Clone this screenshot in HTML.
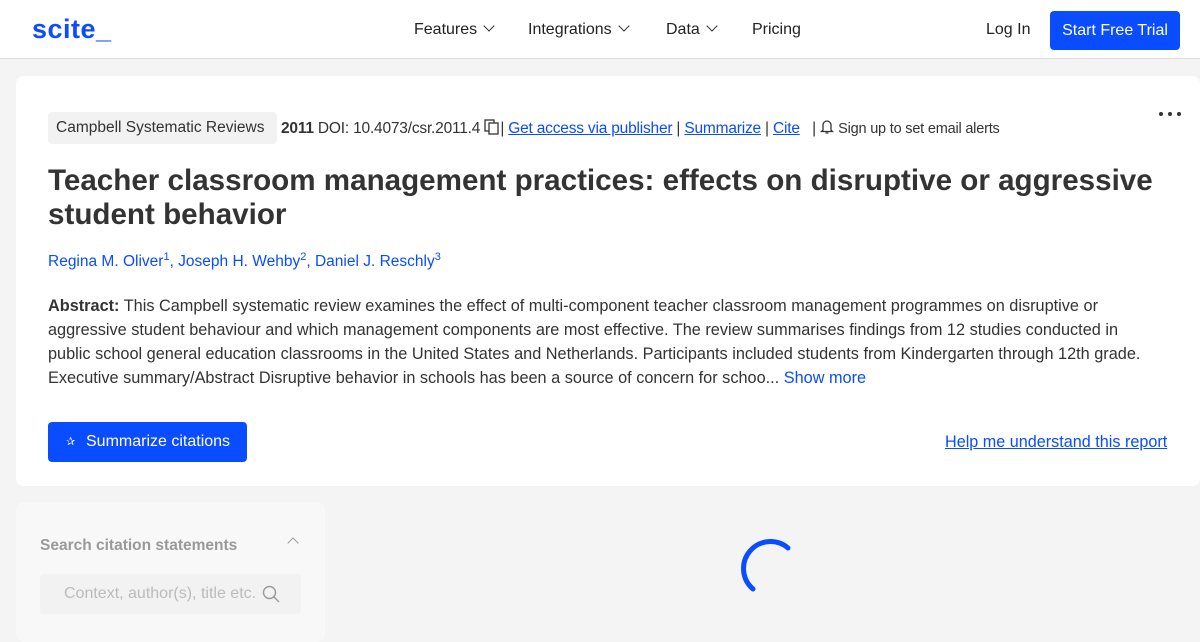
<!DOCTYPE html>
<html><head><style>
*{margin:0;padding:0;box-sizing:border-box}
body{width:1200px;height:630px;overflow:hidden;background:#f4f4f4;font-family:"Liberation Sans",sans-serif;color:#222;position:relative}
.hdr{position:absolute;left:0;top:0;width:1200px;height:59px;background:#fff;border-bottom:1px solid #ddd}
.logo{position:absolute;left:32px;top:14px;font-size:27px;font-weight:bold;color:#0a4cff;letter-spacing:0.5px}
.nav{position:absolute;top:21px;font-size:16px;color:#222}
.chev{display:inline-block;width:8px;height:8px;border-right:1.2px solid #333;border-bottom:1.2px solid #333;transform:rotate(45deg);margin-left:8px;position:relative;top:-4px}
.btn{position:absolute;left:1050px;top:11px;width:130px;height:39px;background:#0a4cff;color:#fff;border-radius:4px;font-size:16px;line-height:39px;text-align:center}
.card{position:absolute;left:16px;top:76px;width:1184px;height:410px;background:#fff;border-radius:8px}
.tag{position:absolute;left:48px;top:112px;height:32px;width:229px;padding:0 8px;background:#f2f2f2;border-radius:4px;font-size:15.5px;line-height:32px;color:#333}
.meta{position:absolute;left:281px;top:119px;font-size:15.5px;color:#333;white-space:nowrap;letter-spacing:-0.2px}
a{color:#0a4cff;text-decoration:underline}
h1{position:absolute;left:48px;top:164px;width:1130px;font-size:29.6px;line-height:34px;font-weight:bold;color:#333}
.auth{position:absolute;left:48px;top:251px;font-size:15.5px;color:#0a4cff}
.auth sup{font-size:11px;color:#0a4cff}
.abs{position:absolute;left:48px;top:294px;width:1110px;font-size:16.3px;line-height:24px;color:#333}
.sb{position:absolute;left:48px;top:422px;width:199px;height:40px;background:#0a4cff;border-radius:4px;color:#fff;font-size:16px;line-height:40px;padding-left:38px}
.help{position:absolute;left:945px;top:433px;font-size:16.2px}
.side{position:absolute;left:16px;top:502px;width:309px;height:140px;background:#f8f8f8;border-radius:8px}
.st{position:absolute;left:40px;top:537px;font-size:15.5px;font-weight:bold;color:#999}
.inp{position:absolute;left:40px;top:574px;width:261px;height:40px;background:#f2f2f2;border-radius:3px;font-size:16px;color:#bbb;line-height:40px;padding-left:24px}
.dot{position:absolute;top:112px;width:4px;height:4px;border-radius:2px;background:#333}
</style></head><body>
<div class="hdr">
<div class="logo">scite_</div>
<div class="nav" style="left:414px">Features<span class="chev"></span></div>
<div class="nav" style="left:528px">Integrations<span class="chev"></span></div>
<div class="nav" style="left:666px">Data<span class="chev"></span></div>
<div class="nav" style="left:752px">Pricing</div>
<div class="nav" style="left:986px">Log In</div>
<div class="btn">Start Free Trial</div>
</div>
<div class="card"></div>
<div class="dot" style="left:1159px"></div><div class="dot" style="left:1168px"></div><div class="dot" style="left:1177px"></div>
<div class="tag">Campbell Systematic Reviews</div>
<div class="meta"><b>2011</b> DOI: 10.4073/csr.2011.4 <svg width="16" height="16" viewBox="0 0 16 16" style="vertical-align:-2px"><rect x="1" y="1" width="9" height="11" fill="none" stroke="#333" stroke-width="1.3"/><rect x="5" y="4" width="9" height="11" fill="#fff" stroke="#333" stroke-width="1.3"/></svg>| <a>Get access via publisher</a> | <a>Summarize</a> | <a>Cite</a> &nbsp;&nbsp;| <svg width="14" height="16" viewBox="0 0 14 16" style="vertical-align:-2px"><path d="M3 11V6a4 4 0 018 0v5l1.5 1.5h-11z M5.5 14h3" fill="none" stroke="#333" stroke-width="1.3"/></svg> <span style="font-size:14.5px">Sign up to set email alerts</span></div>
<h1>Teacher classroom management practices: effects on disruptive or aggressive student behavior</h1>
<div class="auth">Regina M. Oliver<sup>1</sup>, Joseph H. Wehby<sup>2</sup>, Daniel J. Reschly<sup>3</sup></div>
<div class="abs"><b>Abstract:</b> This Campbell systematic review examines the effect of multi-component teacher classroom management programmes on disruptive or aggressive student behaviour and which management components are most effective. The review summarises findings from 12 studies conducted in public school general education classrooms in the United States and Netherlands. Participants included students from Kindergarten through 12th grade. Executive summary/Abstract Disruptive behavior in schools has been a source of concern for schoo... <span style="color:#0a4cff">Show more</span></div>
<div class="sb"><span style="position:absolute;left:18px;font-size:11px">✰</span>Summarize citations</div>
<a class="help">Help me understand this report</a>
<div class="side"></div>
<div class="st">Search citation statements</div>
<div style="position:absolute;left:289px;top:539px;width:8px;height:8px;border-left:1px solid #999;border-top:1px solid #999;transform:rotate(45deg)"></div>
<div class="inp">Context, author(s), title etc.</div>
<svg style="position:absolute;left:262px;top:585px" width="18" height="18" viewBox="0 0 18 18"><circle cx="7.5" cy="7.5" r="6" fill="none" stroke="#999" stroke-width="1.4"/><path d="M12 12l5 5" stroke="#999" stroke-width="1.4"/></svg>
<svg style="position:absolute;left:731px;top:535px" width="60" height="60" viewBox="0 0 60 60"><path d="M57 13 A25 25 0 1 0 22 54" fill="none" stroke="#0a4cff" stroke-width="5" stroke-linecap="round"/></svg>
</body></html>
